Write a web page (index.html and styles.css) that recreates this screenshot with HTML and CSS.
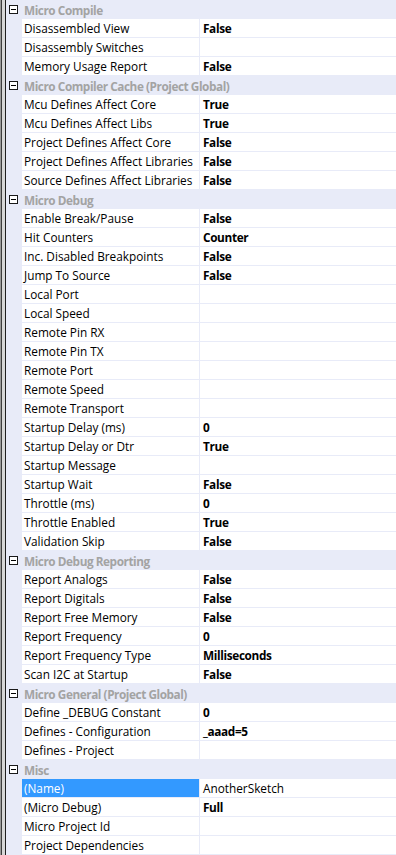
FILE: index.html
```html
<!DOCTYPE html>
<html>
<head>
<meta charset="utf-8">
<link rel="stylesheet" href="styles.css">
</head>
<body>
<div class="grid">
  <div class="edge"></div>
  <div class="list">
    <div class="cat"><span class="tog"></span><span class="ctext">Micro Compile</span></div>
    <div class="row"><span class="name">Disassembled View</span><span class="val b">False</span></div>
    <div class="row"><span class="name">Disassembly Switches</span><span class="val"></span></div>
    <div class="row"><span class="name">Memory Usage Report</span><span class="val b">False</span></div>

    <div class="cat"><span class="tog"></span><span class="ctext">Micro Compiler Cache (Project Global)</span></div>
    <div class="row"><span class="name">Mcu Defines Affect Core</span><span class="val b">True</span></div>
    <div class="row"><span class="name">Mcu Defines Affect Libs</span><span class="val b">True</span></div>
    <div class="row"><span class="name">Project Defines Affect Core</span><span class="val b">False</span></div>
    <div class="row"><span class="name">Project Defines Affect Libraries</span><span class="val b">False</span></div>
    <div class="row"><span class="name">Source Defines Affect Libraries</span><span class="val b">False</span></div>

    <div class="cat"><span class="tog"></span><span class="ctext">Micro Debug</span></div>
    <div class="row"><span class="name">Enable Break/Pause</span><span class="val b">False</span></div>
    <div class="row"><span class="name">Hit Counters</span><span class="val b">Counter</span></div>
    <div class="row"><span class="name">Inc. Disabled Breakpoints</span><span class="val b">False</span></div>
    <div class="row"><span class="name">Jump To Source</span><span class="val b">False</span></div>
    <div class="row"><span class="name">Local Port</span><span class="val"></span></div>
    <div class="row"><span class="name">Local Speed</span><span class="val"></span></div>
    <div class="row"><span class="name">Remote Pin RX</span><span class="val"></span></div>
    <div class="row"><span class="name">Remote Pin TX</span><span class="val"></span></div>
    <div class="row"><span class="name">Remote Port</span><span class="val"></span></div>
    <div class="row"><span class="name">Remote Speed</span><span class="val"></span></div>
    <div class="row"><span class="name">Remote Transport</span><span class="val"></span></div>
    <div class="row"><span class="name">Startup Delay (ms)</span><span class="val b">0</span></div>
    <div class="row"><span class="name">Startup Delay or Dtr</span><span class="val b">True</span></div>
    <div class="row"><span class="name">Startup Message</span><span class="val"></span></div>
    <div class="row"><span class="name">Startup Wait</span><span class="val b">False</span></div>
    <div class="row"><span class="name">Throttle (ms)</span><span class="val b">0</span></div>
    <div class="row"><span class="name">Throttle Enabled</span><span class="val b">True</span></div>
    <div class="row"><span class="name">Validation Skip</span><span class="val b">False</span></div>

    <div class="cat"><span class="tog"></span><span class="ctext">Micro Debug Reporting</span></div>
    <div class="row"><span class="name">Report Analogs</span><span class="val b">False</span></div>
    <div class="row"><span class="name">Report Digitals</span><span class="val b">False</span></div>
    <div class="row"><span class="name">Report Free Memory</span><span class="val b">False</span></div>
    <div class="row"><span class="name">Report Frequency</span><span class="val b">0</span></div>
    <div class="row"><span class="name">Report Frequency Type</span><span class="val b">Milliseconds</span></div>
    <div class="row"><span class="name">Scan I2C at Startup</span><span class="val b">False</span></div>

    <div class="cat"><span class="tog"></span><span class="ctext">Micro General (Project Global)</span></div>
    <div class="row"><span class="name">Define _DEBUG Constant</span><span class="val b">0</span></div>
    <div class="row"><span class="name">Defines - Configuration</span><span class="val b">_aaad=5</span></div>
    <div class="row"><span class="name">Defines - Project</span><span class="val"></span></div>

    <div class="cat"><span class="tog"></span><span class="ctext">Misc</span></div>
    <div class="row sel"><span class="name">(Name)</span><span class="val">AnotherSketch</span></div>
    <div class="row"><span class="name">(Micro Debug)</span><span class="val b">Full</span></div>
    <div class="row"><span class="name">Micro Project Id</span><span class="val"></span></div>
    <div class="row"><span class="name">Project Dependencies</span><span class="val"></span></div>
  </div>
</div>
</body>
</html>
```

FILE: styles.css
```css
html, body {
  margin: 0;
  padding: 0;
  background: #ffffff;
}
body {
  font-family: "Open Sans", "Noto Sans", sans-serif;
  font-size: 11.8px;
  color: #000;
  overflow: hidden;
}
.grid {
  display: flex;
  width: 396px;
  height: 855px;
}
.edge {
  width: 7px;
  flex: none;
  background: linear-gradient(to right,
    #9a9a9a 0, #9a9a9a 1px,
    #3c3c3c 1px, #3c3c3c 2px,
    #d6d6d6 2px, #d6d6d6 5px,
    #1e1e1e 5px, #1e1e1e 6px,
    #e8ebf8 6px, #e8ebf8 7px);
}
.list {
  flex: 1;
  display: flex;
  flex-direction: column;
  background: #e8ebf8;
}
.cat {
  height: 19px;
  display: flex;
  align-items: center;
  background: #e8ebf8;
}
.tog {
  width: 9px;
  height: 9px;
  box-sizing: border-box;
  border: 1px solid #1a1a1a;
  background: #fff;
  margin-left: 2px;
  margin-right: 6px;
  position: relative;
  flex: none;
}
.tog::after {
  content: "";
  position: absolute;
  left: 1px;
  top: 3px;
  width: 5px;
  height: 1px;
  background: #000;
}
.ctext {
  font-weight: bold;
  color: #a3a3a3;
  white-space: nowrap;
  letter-spacing: -0.45px;
}
.row {
  height: 18px;
  margin-bottom: 1px;
  display: grid;
  grid-template-columns: 177px 1fr;
  column-gap: 1px;
  margin-left: 15px;
}
.name, .val {
  background: #fff;
  display: flex;
  align-items: center;
  white-space: nowrap;
  overflow: hidden;
}
.name {
  padding-left: 2px;
}
.val {
  padding-left: 3px;
}
.b {
  font-weight: bold;
  letter-spacing: -0.35px;
}
.sel .name {
  background: #3399ff;
  color: #fff;
}
```
